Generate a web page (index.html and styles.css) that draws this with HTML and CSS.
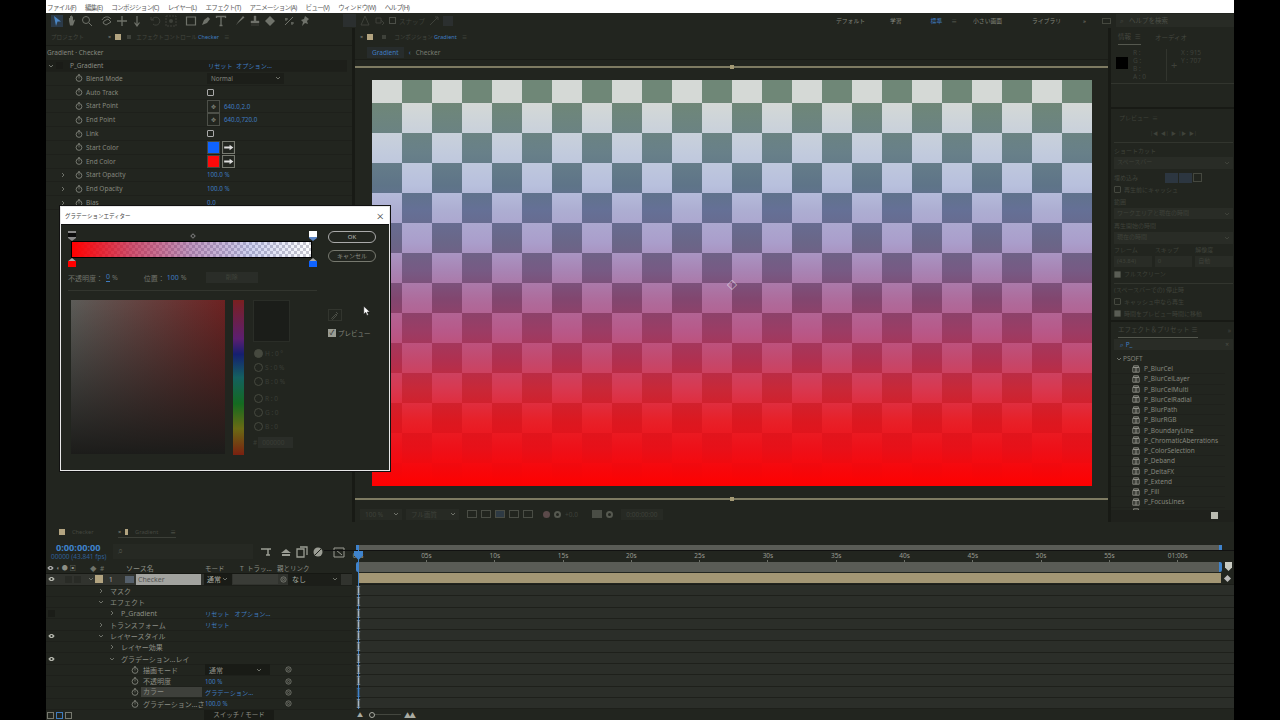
FILE: index.html
```html
<!DOCTYPE html>
<html lang="ja">
<head>
    <meta charset="UTF-8">
    <title>Gradient - Checker</title>
    <link rel="stylesheet" href="styles.css">
</head>
<body>

<svg class="defs" width="0" height="0">
    <symbol id="watch" viewBox="0 0 10 10"><circle cx="5" cy="5.6" r="3.6" fill="none" stroke="currentColor"/><path d="M5 .6v2M3.8.8h2.4M5 5.6V3.4" fill="none" stroke="currentColor" stroke-width=".8"/></symbol>
    <symbol id="chev-r" viewBox="0 0 6 6"><path d="M2 1l2 2-2 2" fill="none" stroke="currentColor"/></symbol>
    <symbol id="chev-d" viewBox="0 0 6 6"><path d="M1 2l2 2 2-2" fill="none" stroke="currentColor"/></symbol>
    <symbol id="eye" viewBox="0 0 10 8"><path d="M.5 4C2 1.5 3.500 1 5 1s3 .5 4.500 3C8 6.500 6.500 7 5 7S2 6.500.5 4z" fill="currentColor"/><circle cx="5" cy="4" r="1.400" fill="#22251f"/></symbol>
    <symbol id="spiral" viewBox="0 0 10 10"><circle cx="5" cy="5" r="3.800" fill="none" stroke="currentColor"/><circle cx="5" cy="5" r="1.600" fill="none" stroke="currentColor" stroke-width=".8"/></symbol>
    <symbol id="fx" viewBox="0 0 10 10"><path d="M1 3h8v6H1zM2 1h6v2H2zM4 3v6M6 3v6" fill="none" stroke="currentColor" stroke-width="1"/></symbol>
    <symbol id="key" viewBox="0 0 6 10"><path d="M1 .5h4M1 9.500h4" stroke="currentColor" fill="none"/><path d="M2 1.500h2v7H2z" fill="currentColor"/></symbol>
    <symbol id="link-arrow" viewBox="0 0 12 12"><path d="M.5.500h11v11H.5z" fill="none" stroke="#777a70"/><path d="M2 5h5V3.500L10.500 6 7 8.500V7H2z" fill="#ddd"/></symbol>
</svg>

<div class="app">

    <div class="menubar">
        <span>ファイル(F)</span><span>編集(E)</span><span>コンポジション(C)</span><span>レイヤー(L)</span><span>エフェクト(T)</span><span>アニメーション(A)</span><span>ビュー(V)</span><span>ウィンドウ(W)</span><span>ヘルプ(H)</span>
    </div>

    <div class="toolbar">
        <div class="tools">
            <svg class="tool is-on" viewBox="0 0 12 12"><path d="M3 1l7 5.500H6.500L5 11z" fill="#4b86c4"/></svg>
            <svg class="tool" viewBox="0 0 12 12"><path d="M3 6V3h1v2-4h1v4-4.500h1V5 1.500h1V6l1-1.500 1 .5-2 5.500H4z" fill="currentColor"/></svg>
            <svg class="tool" viewBox="0 0 12 12"><circle cx="5" cy="5" r="3.500" fill="none" stroke="currentColor"/><path d="M8 8l3 3" stroke="currentColor"/></svg>
            <i class="tool-gap"></i>
            <svg class="tool" viewBox="0 0 12 12"><path d="M1 5c2-4 7-4 9-1M2 8l3 2 5-3-3-3-4 2z" fill="none" stroke="currentColor"/></svg>
            <svg class="tool" viewBox="0 0 12 12"><path d="M6 1v10M1 6h10" stroke="currentColor" stroke-width="1.300"/></svg>
            <svg class="tool" viewBox="0 0 12 12"><path d="M6 1v9M3.500 7.500L6 11l2.500-3.500" fill="none" stroke="currentColor" stroke-width="1.200"/></svg>
            <i class="tool-gap"></i>
            <svg class="tool dim" viewBox="0 0 12 12"><path d="M2 5a4 4 0 1 1 1 4M1 2v3h3" fill="none" stroke="currentColor"/></svg>
            <svg class="tool dim" viewBox="0 0 12 12"><path d="M1 1h10v10H1z" fill="none" stroke="currentColor" stroke-dasharray="2 1"/><circle cx="6" cy="6" r="2" fill="currentColor"/></svg>
            <i class="tool-gap"></i>
            <svg class="tool" viewBox="0 0 12 12"><path d="M1.500 2h9v8h-9z" fill="none" stroke="currentColor" stroke-width="1.200"/></svg>
            <svg class="tool" viewBox="0 0 12 12"><path d="M2 10l2-5 4-3 2 2-3 4z" fill="currentColor"/></svg>
            <svg class="tool" viewBox="0 0 12 12"><path d="M1.500 3V1.500h9V3M6 1.500V10.500M4.500 10.500h3" fill="none" stroke="currentColor" stroke-width="1.300"/></svg>
            <i class="tool-gap"></i>
            <svg class="tool" viewBox="0 0 12 12"><path d="M2 10l2-3 5-6 1.500 1.500-6 5z" fill="currentColor"/></svg>
            <svg class="tool" viewBox="0 0 12 12"><path d="M5 1h2v5h3v2H2V6h3zM2 10h8" fill="currentColor" stroke="currentColor" stroke-width=".4"/></svg>
            <svg class="tool" viewBox="0 0 12 12"><path d="M6 1l5 5-5 5-5-5z" fill="currentColor"/></svg>
            <i class="tool-gap"></i>
            <svg class="tool" viewBox="0 0 12 12"><path d="M1 10L9 2M2 3v3M1 4h3M8 7v3M7 8h3" fill="none" stroke="currentColor"/></svg>
            <svg class="tool" viewBox="0 0 12 12"><path d="M6 1l4 3-2 2 1 3-3-1-3 3 1-4-2-2 3-1z" fill="currentColor"/></svg>
        </div>
        <div class="snap">
            <span class="snap-on"></span>
            <svg class="tool dim" viewBox="0 0 12 12"><path d="M6 1l4 9H2z" fill="none" stroke="currentColor"/></svg>
            <svg class="tool dim" viewBox="0 0 12 12"><path d="M2 3h5v5H2zM7 5l3 3-2 2" fill="none" stroke="currentColor"/></svg>
            <span class="snap-box"></span><span>スナップ</span>
            <svg class="tool dim" viewBox="0 0 12 12"><path d="M2 10l8-8M7 2h3v3" fill="none" stroke="currentColor"/></svg>
            <span class="snap-on small"></span>
        </div>
        <div class="workspaces">
            <span class="ws-default">デフォルト</span><span class="ws-learn">学習</span><span class="blue">標準</span><span class="burger">≡</span><span class="ws-small">小さい画面</span><span class="ws-lib">ライブラリ</span><span class="more">»</span><span class="ws-icon"></span>
        </div>
        <div class="help-search">⌕&nbsp;&nbsp;&nbsp;ヘルプを検索</div>
    </div>

    <div class="workspace">

        <section class="panel effects">
            <div class="tabs">
                <span class="tab-dim tab-project">プロジェクト</span>
                <span class="tab-cur">
                    <b>×</b><i class="chip"></i><i class="lock"></i>
                    <span class="tab-dim">エフェクトコントロール</span><span class="blue">&nbsp;Checker</span><span class="burger">≡</span>
                </span>
            </div>
            <div class="crumb">Gradient · Checker</div>
            <div class="fx-list">
                <div class="fx-row fx-head">
                    <svg class="chev head-chev"><use href="#chev-d"/></svg><i class="black-box"></i>
                    <span class="fx-name head-name">P_Gradient</span>
                    <span class="blue fx-val">リセット&nbsp;&nbsp;オプション...</span>
                </div>
                <div class="fx-row"><i class="nochev"></i><svg class="watch"><use href="#watch"/></svg><span class="fx-name">Blend Mode</span><span class="fx-val"><span class="select">Normal<svg class="chev"><use href="#chev-d"/></svg></span></span></div>
                <div class="fx-row"><i class="nochev"></i><svg class="watch"><use href="#watch"/></svg><span class="fx-name">Auto Track</span><span class="fx-val"><i class="check"></i></span></div>
                <div class="fx-row"><i class="nochev"></i><svg class="watch"><use href="#watch"/></svg><span class="fx-name">Start Point</span><span class="fx-val"><i class="target">✥</i><span class="blue">640.0,2.0</span></span></div>
                <div class="fx-row"><i class="nochev"></i><svg class="watch"><use href="#watch"/></svg><span class="fx-name">End Point</span><span class="fx-val"><i class="target">✥</i><span class="blue">640.0,720.0</span></span></div>
                <div class="fx-row"><i class="nochev"></i><svg class="watch"><use href="#watch"/></svg><span class="fx-name">Link</span><span class="fx-val"><i class="check"></i></span></div>
                <div class="fx-row"><i class="nochev"></i><svg class="watch"><use href="#watch"/></svg><span class="fx-name">Start Color</span><span class="fx-val"><i class="swatch sw-blue"></i><svg class="arrow-btn"><use href="#link-arrow"/></svg></span></div>
                <div class="fx-row"><i class="nochev"></i><svg class="watch"><use href="#watch"/></svg><span class="fx-name">End Color</span><span class="fx-val"><i class="swatch sw-red"></i><svg class="arrow-btn"><use href="#link-arrow"/></svg></span></div>
                <div class="fx-row"><svg class="chev"><use href="#chev-r"/></svg><svg class="watch"><use href="#watch"/></svg><span class="fx-name">Start Opacity</span><span class="fx-val blue">100.0 %</span></div>
                <div class="fx-row"><svg class="chev"><use href="#chev-r"/></svg><svg class="watch"><use href="#watch"/></svg><span class="fx-name">End Opacity</span><span class="fx-val blue">100.0 %</span></div>
                <div class="fx-row"><svg class="chev"><use href="#chev-r"/></svg><svg class="watch"><use href="#watch"/></svg><span class="fx-name">Bias</span><span class="fx-val blue">0.0</span></div>
            </div>
        </section>

        <section class="panel comp">
            <div class="tabs comp-tabs">
                <b>×</b><i class="chip"></i><i class="lock"></i>
                <span class="tab-dim">コンポジション</span><span class="blue">&nbsp;Gradient</span><span class="burger">≡</span>
            </div>
            <div class="comp-crumb">
                <span class="crumb-on blue">Gradient</span><span class="blue">‹</span><span>Checker</span>
            </div>
            <div class="guide"><i></i></div>
            <div class="canvas"><span class="center-mark">◇</span></div>
            <div class="guide guide-low"><i></i></div>
            <div class="viewer-bar">
                <span class="vb-drop">100 %<svg class="chev"><use href="#chev-d"/></svg></span>
                <span class="vb-drop wide">フル画質<svg class="chev"><use href="#chev-d"/></svg></span>
                <i class="vb-ico first"></i><i class="vb-ico"></i><i class="vb-ico on"></i><i class="vb-ico"></i><i class="vb-ico"></i>
                <i class="vb-dot"></i><i class="vb-ring"></i><span>+0.0</span>
                <i class="vb-ico cam"></i><i class="vb-ring"></i>
                <span class="vb-time">0:00:00:00</span>
            </div>
        </section>

        <aside class="side">
            <section class="panel info">
                <div class="side-tabs"><span class="under">情報&nbsp;&nbsp;≡</span><span>オーディオ</span></div>
                <div class="info-body">
                    <i class="info-swatch"></i>
                    <div class="info-rgb">R :<br>G :<br>B :<br>A : 0</div>
                    <span class="info-plus">+</span>
                    <div class="info-xy">X : 915<br>Y : 707</div>
                </div>
            </section>
            <section class="panel preview">
                <div class="pv-title">プレビュー&nbsp;&nbsp;≡</div>
                <div class="pv-controls">|◀ &nbsp;◀| &nbsp;▶ &nbsp;|▶ &nbsp;▶|</div>
                <div>ショートカット</div>
                <div class="pv-drop">スペースバー<svg class="chev"><use href="#chev-d"/></svg></div>
                <div class="pv-line pv-gap">埋め込み<span class="pv-btns"><i></i><i></i><i class="off"></i></span></div>
                <div class="pv-line"><i class="check dimcheck"></i>再生前にキャッシュ</div>
                <div>範囲</div>
                <div class="pv-drop">ワークエリアと現在の時間<svg class="chev"><use href="#chev-d"/></svg></div>
                <div>再生開始の時間</div>
                <div class="pv-drop">現在の時間<svg class="chev"><use href="#chev-d"/></svg></div>
                <div class="pv-three"><span>フレーム</span><span>スキップ</span><span>解像度</span></div>
                <div class="pv-three boxes"><span>(43.84)</span><span>0</span><span>自動</span></div>
                <div class="pv-line"><i class="check dimcheck on"></i>フルスクリーン</div>
                <div class="pv-rule">(スペースバーでの) 停止時</div>
                <div class="pv-line"><i class="check dimcheck"></i>キャッシュ中なら再生</div>
                <div class="pv-line"><i class="check dimcheck on"></i>時間をプレビュー時間に移動</div>
            </section>
            <section class="panel presets">
                <div class="side-tabs"><span class="under">エフェクト＆プリセット&nbsp;≡</span><span class="more-r">»</span></div>
                <div class="preset-search"><span class="blue">⌕ P_</span><span>×</span></div>
                <div class="preset-list">
                    <div class="preset-group"><svg class="chev"><use href="#chev-d"/></svg>PSOFT</div>
                    <div class="preset"><svg><use href="#fx"/></svg>P_BlurCel</div>
                    <div class="preset"><svg><use href="#fx"/></svg>P_BlurCelLayer</div>
                    <div class="preset"><svg><use href="#fx"/></svg>P_BlurCelMulti</div>
                    <div class="preset"><svg><use href="#fx"/></svg>P_BlurCelRadial</div>
                    <div class="preset"><svg><use href="#fx"/></svg>P_BlurPath</div>
                    <div class="preset"><svg><use href="#fx"/></svg>P_BlurRGB</div>
                    <div class="preset"><svg><use href="#fx"/></svg>P_BoundaryLine</div>
                    <div class="preset"><svg><use href="#fx"/></svg>P_ChromaticAberrations</div>
                    <div class="preset"><svg><use href="#fx"/></svg>P_ColorSelection</div>
                    <div class="preset"><svg><use href="#fx"/></svg>P_Deband</div>
                    <div class="preset"><svg><use href="#fx"/></svg>P_DeltaFX</div>
                    <div class="preset"><svg><use href="#fx"/></svg>P_Extend</div>
                    <div class="preset"><svg><use href="#fx"/></svg>P_Fill</div>
                    <div class="preset"><svg><use href="#fx"/></svg>P_FocusLines</div>
                    <div class="preset"><svg><use href="#fx"/></svg>P_Glow</div>
                </div>
                <div class="preset-foot"><i></i></div>
            </section>
        </aside>
    </div>

    <section class="timeline">
        <div class="tl-tabs">
            <span class="tl-tab"><i class="chip"></i>Checker</span>
            <span class="tl-tab cur"><b>×</b><i class="chip"></i>Gradient<span class="burger">≡</span></span>
        </div>
        <div class="tl-main">
            <div class="tl-left">
                <div class="tl-top">
                    <div class="timecode"><strong>0:00:00:00</strong><span>00000 (43.841 fps)</span></div>
                    <div class="tl-search">⌕</div>
                    <div class="tl-icons">
                        <svg class="ico-a" viewBox="0 0 12 12"><path d="M1 3h10M8 3v6M6 9h4" fill="none" stroke="currentColor" stroke-width="1.500"/></svg>
                        <svg viewBox="0 0 12 12"><path d="M1 7l5-4 5 4zM2 8h8v2H2z" fill="currentColor"/></svg>
                        <svg viewBox="0 0 12 12"><path d="M1 3h7v8H1zM4 1h7v8" fill="none" stroke="currentColor" stroke-width="1.300"/></svg>
                        <svg viewBox="0 0 12 12"><circle cx="6" cy="6" r="4.500" fill="currentColor"/><path d="M3 9l6-6" stroke="#22251f"/></svg>
                        <svg class="ico-e" viewBox="0 0 12 12"><path d="M1 2h10v9H1zM3 4l6 5" fill="none" stroke="currentColor"/></svg>
                    </div>
                </div>
                <div class="tl-head">
                    <span class="hd-icons"><svg><use href="#eye"/></svg><i>◖</i><i>●</i><i>▣</i></span>
                    <span class="hd-tag">◆&nbsp;&nbsp;#</span>
                    <span class="hd-name">ソース名</span>
                    <span class="hd-mode">モード</span>
                    <span class="hd-trk">T&nbsp;&nbsp;トラッ...</span>
                    <span class="hd-par">親とリンク</span>
                </div>
                <div class="layer">
                    <svg class="eye"><use href="#eye"/></svg>
                    <i class="lbox"></i><i class="lbox"></i>
                    <svg class="chev lchev"><use href="#chev-d"/></svg>
                    <i class="chip big"></i>
                    <span class="num">1</span>
                    <i class="comp-ico"></i>
                    <span class="lname">Checker</span>
                    <span class="lmode">通常<svg class="chev"><use href="#chev-d"/></svg></span>
                    <i class="ltrk"></i>
                    <svg class="spiral"><use href="#spiral"/></svg>
                    <span class="lpar">なし<svg class="chev"><use href="#chev-d"/></svg></span>
                </div>
                <div class="prop d1"><svg class="chev"><use href="#chev-r"/></svg><span class="pname">マスク</span></div>
                <div class="prop d1"><svg class="chev"><use href="#chev-d"/></svg><span class="pname">エフェクト</span></div>
                <div class="prop d2"><i class="prop-mark"></i><svg class="chev"><use href="#chev-r"/></svg><span class="pname">P_Gradient</span><span class="pval blue">リセット&nbsp;&nbsp;&nbsp;オプション...</span></div>
                <div class="prop d1"><svg class="chev"><use href="#chev-r"/></svg><span class="pname">トランスフォーム</span><span class="pval blue">リセット</span></div>
                <div class="prop d1"><svg class="eye"><use href="#eye"/></svg><svg class="chev"><use href="#chev-d"/></svg><span class="pname">レイヤースタイル</span></div>
                <div class="prop d2"><svg class="chev"><use href="#chev-r"/></svg><span class="pname">レイヤー効果</span></div>
                <div class="prop d2"><svg class="eye"><use href="#eye"/></svg><svg class="chev"><use href="#chev-d"/></svg><span class="pname">グラデーション...レイ</span></div>
                <div class="prop d3"><svg class="watch"><use href="#watch"/></svg><span class="pname">描画モード</span><span class="pval"><span class="pselect">通常<svg class="chev"><use href="#chev-d"/></svg></span></span><svg class="spiral"><use href="#spiral"/></svg></div>
                <div class="prop d3"><svg class="watch"><use href="#watch"/></svg><span class="pname">不透明度</span><span class="pval blue">100 %</span><svg class="spiral"><use href="#spiral"/></svg></div>
                <div class="prop d3"><svg class="watch"><use href="#watch"/></svg><span class="pname hilite">カラー</span><span class="pval blue">グラデーション...</span><svg class="spiral"><use href="#spiral"/></svg></div>
                <div class="prop d3"><svg class="watch"><use href="#watch"/></svg><span class="pname">グラデーション...さ</span><span class="pval blue">100.0 %</span><svg class="spiral"><use href="#spiral"/></svg></div>
                <div class="tl-foot">
                    <span class="foot-icons"><i></i><i class="on"></i><i></i></span>
                    <span class="toggle">スイッチ / モード</span>
                </div>
            </div>
            <div class="tl-right">
                <div class="workarea"></div>
                <div class="ruler">
                    <span>00s</span><span>05s</span><span>10s</span><span>15s</span><span>20s</span><span>25s</span><span>30s</span><span>35s</span><span>40s</span><span>45s</span><span>50s</span><span>55s</span><span>01:00s</span>
                </div>
                <div class="range-row"><div class="range"></div><i class="shield"></i></div>
                <div class="track-layer"><div class="clip"></div><i class="clip-end"></i></div>
                <div class="track"><svg><use href="#key"/></svg></div>
                <div class="track"><svg><use href="#key"/></svg></div>
                <div class="track"><svg><use href="#key"/></svg></div>
                <div class="track"><svg><use href="#key"/></svg></div>
                <div class="track"><svg><use href="#key"/></svg></div>
                <div class="track"><svg><use href="#key"/></svg></div>
                <div class="track"><svg><use href="#key"/></svg></div>
                <div class="track"><svg><use href="#key"/></svg></div>
                <div class="track"><svg><use href="#key"/></svg></div>
                <div class="track"><svg class="key-on"><use href="#key"/></svg></div>
                <div class="track"><svg><use href="#key"/></svg></div>
                <div class="tr-foot">
                    <span class="mount">▲</span><i class="zoom-knob"></i><i class="zoom-line"></i><span class="mount big">▲▲</span>
                </div>
                <i class="playhead"></i>
            </div>
        </div>
    </section>

    <div class="dialog">
        <div class="dlg-title"><span>グラデーションエディター</span><span class="dlg-close">×</span></div>
        <div class="dlg-body">
            <div class="dlg-left">
                <div class="stops-top">
                    <i class="stop stop-black"></i><i class="mid-diamond"></i><i class="stop stop-white"></i>
                </div>
                <div class="grad-bar"></div>
                <div class="stops-bottom">
                    <i class="cstop cstop-red"></i><i class="cstop cstop-blue"></i>
                </div>
                <div class="dlg-opacity">
                    <span>不透明度：</span><span class="blue ul">0</span><span>%</span>
                    <span class="pos-label">位置：</span><span class="blue">100</span><span>%</span>
                    <span class="del-btn">削除</span>
                </div>
                <div class="picker">
                    <div class="field"></div>
                    <div class="hue"></div>
                    <div class="pick-right">
                        <div class="cur-color"></div>
                        <div class="radio on">H : 0 °</div>
                        <div class="radio">S : 0 %</div>
                        <div class="radio sep">B : 0 %</div>
                        <div class="radio">R : 0</div>
                        <div class="radio">G : 0</div>
                        <div class="radio sep">B : 0</div>
                        <div class="hex"># <span>000000</span></div>
                    </div>
                </div>
            </div>
            <div class="dlg-right">
                <span class="dbtn ok">OK</span>
                <span class="dbtn">キャンセル</span>
                <span class="eyedrop"><svg viewBox="0 0 10 10"><path d="M1.500 8.500L6 4l1 1-4.500 4.500zM6 2l2 2" stroke="#4a4d45" fill="none"/></svg></span>
                <label class="dlg-check"><i>✓</i>プレビュー</label>
            </div>
        </div>
    </div>

    <svg class="cursor" viewBox="0 0 10 14"><path d="M1 1v10l2.500-2.300L5 12.500l1.800-.8-1.500-3.500H8.500z" fill="#fff" stroke="#111" stroke-width=".6"/></svg>
</div>

</body>
</html>
```

FILE: styles.css
```css
* { box-sizing: border-box; }
html, body { margin: 0; height: 720px; overflow: hidden; background: #000; }
body { font-family: "Noto Sans", "Noto Sans CJK JP", sans-serif; font-size: 6.5px; color: #8c8e85; }
i { font-style: normal; display: block; }
svg { display: block; flex: none; }
.defs { position: absolute; }
.blue { color: #3f7cc0; }
.burger { color: #5e6159; margin-left: 5px; }

.app { position: relative; width: 1188px; height: 720px; margin-left: 46px; background: #181a15; display: flex; flex-direction: column; overflow: hidden; }

/* top */
.menubar { height: 13px; background: #fff; color: #5c5c5c; font-size: 6.5px; letter-spacing: -.62px; display: flex; gap: 9px; padding-left: 1px; align-items: center; white-space: nowrap; }
.toolbar { height: 15px; background: #22251f; display: flex; align-items: center; color: #5f625a; white-space: nowrap; }
.tools { display: flex; align-items: center; width: 265px; padding-left: 5px; gap: 3px; flex: none; }
.tool { width: 12px; height: 12px; color: #6f726a; }
.tool.dim { color: #3e413a; }
.tool.is-on { background: #2b3a48; }
.tool-gap { width: 5px; }
.snap { display: flex; align-items: center; gap: 3px; width: 525px; flex: none; padding-left: 32px; color: #3e413a; }
.snap-on { width: 13px; height: 13px; background: #2b2f2f; }
.snap-on.small { width: 10px; height: 10px; }
.snap-box { width: 7px; height: 7px; border: 1px solid #4c4f48; }
.workspaces { display: flex; align-items: center; color: #83857c; flex: none; font-size: 5.800px; }
.ws-default { margin-right: 25px; }
.ws-learn { margin-right: 29px; }
.workspaces .burger { margin-left: 9px; margin-right: 16px; }
.ws-small { margin-right: 30px; }
.ws-lib { margin-right: 22px; }
.workspaces .more { margin-right: 16px; }
.ws-icon { width: 9px; height: 6px; border: 1px solid #45483f; }
.help-search { width: 118px; flex: none; height: 13px; margin-left: auto; background: #282b25; color: #4c4f47; padding: 1px 4px; }

.workspace { height: 494px; display: flex; gap: 3px; }
.panel { background: #22251f; }
.tabs { height: 18px; display: flex; align-items: center; border-bottom: 1px solid #1b1d18; white-space: nowrap; font-size: 5.500px; }
.tab-dim { color: #44473f; }
.chip { width: 6px; height: 6px; background: #b3a480; }
.chip.big { width: 8px; height: 8px; }
.lock { width: 4px; height: 4px; margin: 0 5px 0 6px; background: #3e413a; }

/* effect controls */
.effects { width: 306px; flex: none; }
.effects .tabs { padding-left: 5px; }
.tab-project { width: 57px; }
.tab-cur { display: flex; align-items: center; height: 18px; }
.tab-cur b, .comp-tabs b { font-weight: 400; color: #8c8e85; margin-right: 4px; }
.crumb { height: 14px; line-height: 14px; padding-left: 1px; color: #85877e; }
.fx-row { height: 13.8px; display: flex; align-items: center; border-bottom: 1px solid #1e201b; padding-left: 14px; color: #85877e; }
.fx-head { height: 12px; background: #1d1f1a; padding-left: 2px; margin-right: 5px; color: #8c8e85; }
.chev { width: 6px; height: 6px; color: #6f726a; }
.head-chev { margin-right: 2px; }
.black-box { width: 7px; height: 7px; background: #1a1b17; margin-right: 4px; }
.nochev { width: 6px; }
.watch { width: 8px; height: 8px; color: #8c8e85; margin-left: 9px; }
.fx-name { width: 122px; padding-left: 3px; }
.head-name { width: 139px; padding-left: 3px; }
.fx-val { display: flex; align-items: center; gap: 4px; padding-left: 2px; }
.effects .fx-val { font-size: 6.2px; }
.select { width: 77px; height: 11px; background: #1c1e19; display: flex; align-items: center; justify-content: space-between; padding: 0 3px 0 4px; }
.check { width: 7px; height: 7px; border: 1px solid #aaa; border-radius: 1px; }
.target { width: 13px; height: 13px; border: 1px solid #4d5049; color: #85877e; text-align: center; line-height: 11px; }
.swatch { width: 13px; height: 13px; border: 1px solid #45483f; }
.sw-blue { background: #0f63ff; }
.sw-red { background: #ff0a0a; }
.arrow-btn { width: 13px; height: 13px; margin-left: -2px; }

/* composition */
.comp { flex: 1; display: flex; flex-direction: column; }
.comp-tabs { padding-left: 5px; border: 0; }
.comp-tabs .lock { margin: 0 8px 0 9px; }
.comp-crumb { height: 14px; display: flex; align-items: center; gap: 5px; padding-left: 12px; border-bottom: 1px solid #1b1d18; color: #777a70; }
.crumb-on { background: #272c2c; padding: 0 5px; height: 11px; line-height: 11px; }
.guide { height: 2px; margin: 6px 0 12px; background: #7e7b62; display: flex; justify-content: center; }
.guide i { width: 4px; height: 4px; margin-top: -1px; background: #a49a75; }
.guide-low { margin: 12px 0 7px; }
.canvas { position: relative; width: 720px; height: 406px; margin-left: 17px; flex: none; background-color: #6f8777;
    background-image: linear-gradient(#6f8777 5%, #6c8480 11%, #688089 18%, #5e7488 26%, #657096 32%, #6a6688 40%, #775a84 47%, #82466f 54%, #9c3c64 62%, #b03050 69%, #c82838 76%, #dc1820 84%, #e81018 91%, #ff0000 100%); }
.canvas::before { content: ""; position: absolute; inset: 0;
    background: linear-gradient(#d5d9d6 5%, #ccd3da 11%, #c2cbdd 18%, #b8c0dd 26%, #adaed2 32%, #aa9ecb 40%, #a884b4 47%, #ae6c9c 54%, #b85888 62%, #c4486c 69%, #d83850 76%, #e82028 84%, #ee1018 91%, #ff0000 100%);
    -webkit-mask-image: repeating-conic-gradient(#000 0 25%, transparent 0 50%);
    -webkit-mask-size: 60px 60px;
    -webkit-mask-position: 0 23px;
    mask-image: repeating-conic-gradient(#000 0 25%, transparent 0 50%);
    mask-size: 60px 60px;
    mask-position: 0 23px; }
.center-mark { position: absolute; left: 355px; top: 197px; color: #eee; font-size: 10px; }
.viewer-bar { height: 14px; display: flex; align-items: center; gap: 4px; padding-left: 5px; color: #3e413a; white-space: nowrap; }
.vb-drop { width: 42px; height: 11px; background: #272a24; display: flex; justify-content: space-between; align-items: center; padding: 0 3px 0 5px; }
.vb-drop.wide { width: 53px; }
.vb-ico { width: 10px; height: 8px; border: 1px solid #4a4d45; }
.vb-ico.first { margin-left: 4px; }
.vb-ico.on { background: #2e3a44; }
.vb-ico.cam { margin-left: 10px; background: #4a4d45; }
.vb-dot { width: 7px; height: 7px; border-radius: 50%; background: #5b4a4a; margin-left: 6px; }
.vb-ring { width: 7px; height: 7px; border-radius: 50%; border: 2px solid #565950; }
.vb-time { width: 42px; height: 11px; background: #272a24; text-align: center; line-height: 11px; margin-left: 4px; }

/* right column */
.side { width: 123px; flex: none; display: flex; flex-direction: column; gap: 2px; }
.side-tabs { height: 18px; display: flex; align-items: center; gap: 14px; padding-left: 7px; color: #44473f; white-space: nowrap; }
.under { border-bottom: 1px solid #55584f; height: 16px; line-height: 15px; }
.info { height: 79px; }
.info-body { height: 38px; display: flex; align-items: center; padding-left: 5px; border-bottom: 1px solid #32352e; color: #3e413a; line-height: 8px; }
.info-swatch { width: 12px; height: 12px; background: #000; margin-top: -4px; }
.info-rgb { width: 39px; padding-left: 5px; border-right: 1px solid #32352e; margin-right: 4px; }
.info-plus { width: 10px; font-size: 11px; }
.info-xy { padding-left: 0; margin-top: -16px; }
.preview { height: 211px; color: #3f423a; padding: 3px 1px 0 3px; white-space: nowrap; overflow: hidden; font-size: 6px; }
.preview > div { height: 12.100px; line-height: 12.100px; }
.preview > .pv-title { height: 12px; padding-left: 5px; }
.preview > .pv-controls { height: 19px; line-height: 19px; text-align: center; border-bottom: 1px solid #32352e; margin-bottom: 2px; font-size: 5px; }
.preview > .pv-drop { height: 11.500px; line-height: 11.500px; background: #292c26; display: flex; justify-content: space-between; align-items: center; padding: 0 3px; margin-bottom: .6px; }
.pv-drop .chev { color: #3f423a; }
.pv-line { display: flex; align-items: center; gap: 3px; }
.pv-gap { margin-top: 3px; }
.pv-btns { display: flex; gap: 1px; margin-left: 24px; }
.pv-btns i { width: 13px; height: 10px; background: #2c3640; }
.pv-btns i.off { background: none; border: 1px solid #45483f; width: 9px; height: 9px; }
.dimcheck { border-color: #45483f; }
.dimcheck.on { background: #5a5d55; }
.pv-three { display: flex; gap: 3px; }
.pv-three span { width: 38px; }
.pv-three.boxes span { background: #292c26; height: 11px; line-height: 11px; padding-left: 3px; }
.pv-rule { border-top: 1px solid #32352e; margin-top: 3px; }
.presets { flex: 1; display: flex; flex-direction: column; min-height: 0; }
.presets .side-tabs { height: 16px; flex: none; justify-content: space-between; padding-right: 3px; }
.preset-search { height: 11px; flex: none; background: #292c26; margin: 1px 1px 3px 3px; display: flex; justify-content: space-between; padding: 0 4px 0 6px; line-height: 11px; color: #4c4f47; }
.preset-list { flex: 1; overflow: hidden; min-height: 0; color: #84867d; }
.preset-group { height: 11px; display: flex; align-items: center; padding-left: 5px; gap: 1px; }
.preset { height: 10.25px; display: flex; align-items: center; gap: 4px; padding-left: 21px; border-bottom: 1px solid #1f211c; white-space: nowrap; margin-right: 9px; }
.preset svg { width: 8px; height: 8px; color: #9a9c93; }
.preset-foot { height: 12px; flex: none; background: #1f211c; display: flex; justify-content: flex-end; padding: 2px 16px 0 0; }
.preset-foot i { width: 7px; height: 7px; background: #b8bab0; }

/* timeline */
.timeline { flex: 1; background: #22251f; display: flex; flex-direction: column; min-height: 0; }
.tl-tabs { height: 19px; flex: none; padding: 4px 0 0 13px; display: flex; color: #44473f; font-size: 5.700px; }
.tl-tab { display: flex; align-items: center; gap: 7px; width: 59px; height: 12px; }
.tl-tab.cur { border-bottom: 1px solid #3c3f38; width: 58px; }
.tl-tab b { font-weight: 400; color: #8c8e85; margin-right: -3px; }
.tl-main { flex: 1; display: flex; min-height: 0; }
.tl-left { width: 306px; flex: none; }
.tl-top { height: 21px; display: flex; align-items: center; }
.timecode { width: 64px; padding-left: 5px; line-height: 8px; color: #2f5f96; font-size: 6.500px; white-space: nowrap; }
.timecode strong { display: block; font-size: 9.200px; color: #3f83cc; line-height: 10px; padding-left: 5px; }
.tl-search { width: 140px; height: 15px; margin-left: 3px; background: #262923; color: #4c4f47; padding-left: 5px; line-height: 14px; font-size: 9px; }
.tl-icons { display: flex; gap: 4px; margin-left: 7px; color: #9b9d94; }
.tl-icons svg { width: 12px; height: 12px; }
.tl-icons .ico-a { margin-right: 4px; }
.tl-icons .ico-e { margin-left: 5px; }
.tl-head { height: 12px; display: flex; align-items: center; color: #8c8e85; border-bottom: 1px solid #161813; white-space: nowrap; }
.hd-icons { display: flex; gap: 2px; align-items: center; width: 40px; padding-left: 1px; font-size: 6px; }
.hd-icons svg { width: 7px; height: 6px; color: #aaa; }
.hd-tag { width: 40px; padding-left: 4px; color: #6f726a; }
.hd-name { width: 79px; font-size: 7px; }
.hd-mode { width: 35px; }
.hd-trk { width: 37px; }
.hd-par { font-size: 6.500px; }
.layer { height: 11.600px; background: #31332e; display: flex; align-items: center; color: #a9aba2; white-space: nowrap; border-bottom: 1px solid #1c1e19; }
.eye { width: 7px; height: 6px; color: #b5b7ae; margin-left: 2px; flex: none; }
.lbox { width: 7px; height: 7px; background: #292b26; margin-left: 2px; }
.eye + .lbox { margin-left: 10px; }
.lchev { margin-left: 7px; }
.layer .chip { margin-left: 1px; }
.num { width: 22px; padding-left: 6px; }
.comp-ico { width: 9px; height: 7px; background: #55606c; margin-right: 2px; }
.lname { width: 65px; height: 11px; line-height: 11px; background: #a2a39f; color: #555; padding-left: 2px; font-size: 7px; }
.lmode { width: 28px; height: 11px; background: #191b16; margin-left: 3px; display: flex; align-items: center; gap: 1px; padding-left: 3px; font-size: 7px; }
.ltrk { width: 45px; height: 10px; background: #3a3c37; margin-left: 1px; margin-right: 2px; }
.spiral { width: 7px; height: 7px; color: #8c8e85; }
.lpar { width: 53px; height: 11px; background: #1c1e19; margin-left: 1px; display: flex; align-items: center; justify-content: space-between; padding: 0 3px 0 4px; font-size: 7px; }
.prop { height: 11.300px; display: flex; align-items: center; border-bottom: 1px solid #1e201b; position: relative; color: #8c8e85; white-space: nowrap; font-size: 7px; }
.prop .eye { position: absolute; left: 0; }
.prop-mark { position: absolute; left: 2px; width: 7px; height: 7px; background: #1b1d18; }
.prop .chev { margin-right: 6px; }
.d1 { padding-left: 52px; }
.d2 { padding-left: 63px; }
.d3 { padding-left: 85px; }
.prop .watch { margin: 0 2px 0 0; color: #8c8e85; }
.d1 .pname { width: 92px; flex: none; }
.d2 .pname { width: 81px; flex: none; }
.d3 .pname { width: 61px; flex: none; padding-left: 2px; margin-right: 3px; }
.d3 .hilite { background: #3e403b; height: 10px; line-height: 10px; }
.pval { width: 80px; padding-left: 3px; font-size: 6.200px; flex: none; }
.d3 .pval { padding-left: 0; }
.pselect { width: 65px; height: 11px; background: #191b16; color: #8c8e85; display: flex; justify-content: space-between; align-items: center; padding: 0 2px 0 4px; font-size: 7px; }
.tl-foot { height: 11px; display: flex; align-items: center; padding-left: 1px; }
.foot-icons { display: flex; gap: 2px; width: 157px; }
.foot-icons i { width: 7px; height: 7px; border: 1px solid #77796f; }
.foot-icons i.on { border-color: #3f7cc0; }
.toggle { width: 70px; height: 10px; background: #191b16; color: #8c8e85; text-align: center; line-height: 10px; }

.tl-right { flex: 1; position: relative; padding-left: 4px; margin-top: 4px; min-width: 0; }
.workarea { height: 5px; width: 866px; background: #5a5c56; border-left: 3px solid #3f83cc; border-right: 3px solid #3f83cc; }
.ruler { height: 12px; display: flex; margin-left: -32px; color: #9a9c93; font-size: 6.500px; line-height: 9px; border-top: 1px solid #111; }
.ruler span { width: 68.300px; flex: none; text-align: center; }
.ruler span::after { content: ""; display: block; width: 1px; height: 2px; margin: 0 auto; background: #6f726a; }
.range-row { height: 10px; display: flex; gap: 3px; }
.range { width: 866px; background: #5a5c56; border-left: 3px solid #3f83cc; border-right: 3px solid #3f83cc; border-radius: 2px; }
.shield { width: 7px; height: 9px; background: #c8cac2; clip-path: polygon(0 0, 100% 0, 100% 60%, 50% 100%, 0 60%); }
.track-layer { height: 13px; padding: 2px 0; border-bottom: 1px solid #1c1e19; display: flex; gap: 4px; align-items: center; }
.clip { width: 863px; height: 10px; margin-left: 2px; background: #a39674; }
.clip-end { width: 5px; height: 5px; background: #bbb; transform: rotate(45deg); }
.track { height: 11.300px; background: #2b2e29; border-bottom: 1px solid #1e201b; padding: 1px 0 0 0; }
.track svg { width: 5px; height: 9px; color: #a8b8c4; position: relative; z-index: 1; }
.track .key-on { color: #3f83cc; }
.tr-foot { height: 11px; display: flex; align-items: center; color: #a9aba2; font-size: 6px; gap: 6px; padding-left: 1px; }
.mount.big { letter-spacing: -2px; font-size: 7px; margin-left: 1px; }
.zoom-knob { width: 6px; height: 6px; border: 1px solid #a9aba2; border-radius: 50%; }
.zoom-line { width: 26px; height: 1px; background: #44473f; margin-left: -6px; margin-right: -4px; }
.playhead { position: absolute; left: 6px; top: 5px; bottom: 11px; width: 1px; background: #3f83cc; }
.playhead::before { content: ""; position: absolute; left: -4px; top: 1px; width: 9px; height: 9px; background: #3f83cc; clip-path: polygon(0 0, 100% 0, 100% 50%, 50% 100%, 0 50%); }

/* dialog */
.dialog { position: absolute; left: 14px; top: 206px; width: 330px; height: 265px; background: #22251f; border: 1px solid #e8e8e8; box-shadow: 0 0 0 1px #111; display: flex; flex-direction: column; }
.dlg-title { height: 17px; flex: none; background: #fff; color: #444; font-size: 5.500px; display: flex; justify-content: space-between; align-items: center; padding: 0 5px 0 4px; }
.dlg-close { font-size: 13px; color: #444; font-weight: 300; }
.dlg-body { flex: 1; display: flex; padding: 6px 0 0 7px; border-top: 1px solid #111; }
.dlg-left { width: 260px; }
.stops-top { height: 10px; display: flex; justify-content: space-between; align-items: center; width: 249px; }
.stop { width: 8px; height: 10px; clip-path: polygon(0 0, 100% 0, 100% 70%, 50% 100%, 0 70%); }
.stop-black { background: linear-gradient(#888 0 15%, #0c0c0c 15% 60%, #888 60%); }
.stop-white { background: linear-gradient(#ffffff 0 60%, #5d86c4 60%); }
.mid-diamond { width: 4px; height: 4px; border: 1px solid #777; transform: rotate(45deg); }
.grad-bar { width: 241px; height: 17px; margin-left: 3px; border: 1px solid #000; background: linear-gradient(to right, rgb(255, 0, 0), rgba(191, 25, 64, .75) 25%, rgba(128, 50, 128, .5) 50%, rgba(64, 74, 191, .25) 75%, rgba(15, 99, 255, 0)), repeating-conic-gradient(#c8c8d0 0 25%, #fff 0 50%) 0 0 / 6px 6px; }
.stops-bottom { height: 9px; display: flex; justify-content: space-between; width: 249px; }
.cstop { width: 8px; height: 9px; clip-path: polygon(50% 0, 100% 35%, 100% 100%, 0 100%, 0 35%); }
.cstop-red { background: linear-gradient(#aaa 0 35%, #f00 35%); }
.cstop-blue { background: linear-gradient(#aaa 0 35%, #0f63ff 35%); }
.dlg-opacity { display: flex; align-items: center; gap: 2px; height: 24px; width: 249px; border-bottom: 1px solid #32352e; padding-bottom: 2px; font-size: 7px; color: #6f726a; }
.dlg-opacity .ul { border-bottom: 1px solid #3f7cc0; line-height: 8px; margin-left: 1px; }
.pos-label { margin-left: 24px; }
.del-btn { width: 52px; height: 11px; background: #2a2d28; margin-left: 17px; text-align: center; line-height: 11px; color: #3f423a; font-size: 6px; }
.picker { display: flex; margin-top: 9px; padding-left: 3px; }
.field { width: 154px; height: 154px; background: linear-gradient(#0000, #1c1c1a), linear-gradient(to right, #5c5c58, #6e2222); }
.hue { width: 11px; height: 155px; margin-left: 8px; background: linear-gradient(#7a2020, #5c1f70 25%, #151f70 35%, #146060 50%, #146a20 67%, #6a6a14 83%, #7a2010); }
.pick-right { margin-left: 9px; width: 42px; color: #3a3d36; }
.cur-color { width: 37px; height: 42px; background: #1b1d19; border: 1px solid #2a2d27; margin-bottom: 4px; }
.radio { height: 14px; display: flex; align-items: center; gap: 2px; padding-left: 1px; white-space: nowrap; }
.radio::before { content: ""; width: 7px; height: 7px; border-radius: 50%; border: 1px solid #46493f; }
.radio.on::before { background: #46493f; }
.radio.sep { height: 17px; align-items: flex-start; padding-top: 3px; }
.hex { display: flex; align-items: center; margin-top: 1px; gap: 1px; }
.hex span { background: #2a2d28; width: 35px; height: 11px; line-height: 11px; padding-left: 4px; }
.dlg-right { display: flex; flex-direction: column; align-items: flex-start; }
.dbtn { width: 48px; height: 12px; border: 1px solid #aaa; border-radius: 6px; text-align: center; line-height: 10px; color: #bbb; margin-bottom: 7px; font-size: 6px; }
.dbtn + .dbtn { border-color: #77796f; color: #8c8e85; }
.eyedrop { width: 14px; height: 12px; border: 1px solid #32352e; margin-top: 40px; }
.eyedrop svg { width: 10px; height: 10px; margin: 0 auto; }
.dlg-check { display: flex; align-items: center; gap: 2px; margin-top: 7px; color: #85877e; }
.dlg-check i { width: 8px; height: 8px; background: #9a9c93; color: #222; line-height: 8px; text-align: center; font-size: 7px; }
.cursor { position: absolute; left: 317px; top: 305px; width: 8px; height: 12px; }
```
